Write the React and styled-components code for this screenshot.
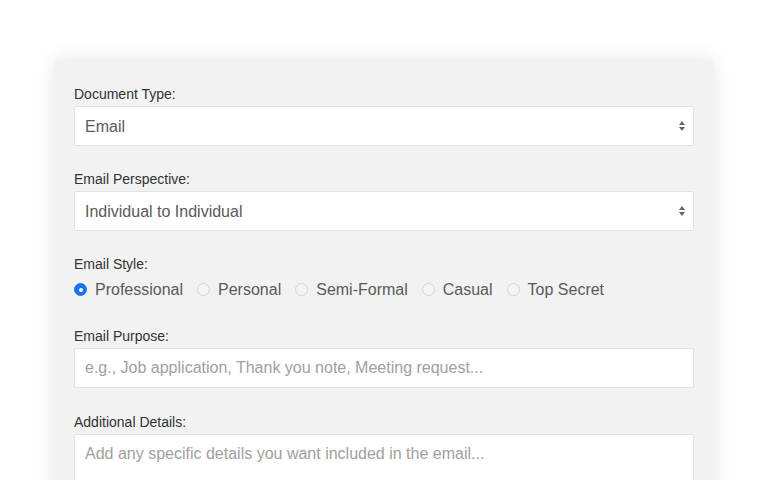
import React, { useState } from "react";
import styled, { createGlobalStyle } from "styled-components";

const GlobalStyle = createGlobalStyle`
  body {
    margin: 0;
    background: #ffffff;
    font-family: "Liberation Sans", Arial, sans-serif;
  }
`;

const styles = ["Professional", "Personal", "Semi-Formal", "Casual", "Top Secret"];

const App = () => {
  const [style, setStyle] = useState("Professional");

  return (
    <>
      <GlobalStyle />
      <Card>
        <Group>
          <Label>Document Type:</Label>
          <SelectWrap>
            <Select defaultValue="Email">
              <option>Email</option>
              <option>Letter</option>
            </Select>
          </SelectWrap>
        </Group>

        <Group>
          <Label>Email Perspective:</Label>
          <SelectWrap>
            <Select defaultValue="Individual to Individual">
              <option>Individual to Individual</option>
              <option>Business to Individual</option>
            </Select>
          </SelectWrap>
        </Group>

        <Group>
          <Label>Email Style:</Label>
          <RadioRow>
            {styles.map((s) => (
              <RadioOption key={s} onClick={() => setStyle(s)}>
                <RadioDot $checked={style === s} />
                {s}
              </RadioOption>
            ))}
          </RadioRow>
        </Group>

        <Group $space={26}>
          <Label>Email Purpose:</Label>
          <Input placeholder="e.g., Job application, Thank you note, Meeting request..." />
        </Group>

        <Group>
          <Label>Additional Details:</Label>
          <TextArea placeholder="Add any specific details you want included in the email..." />
        </Group>
      </Card>
    </>
  );
};

export default App;

const Card = styled.div`
  width: 660px;
  box-sizing: border-box;
  margin: 60px auto;
  padding: 26px 20px 25px;
  background: #f2f2f2;
  box-shadow: 0 0 18px rgba(0, 0, 0, 0.1);
`;

const Group = styled.div`
  display: flex;
  flex-direction: column;
  margin-bottom: ${(p) => p.$space || 25}px;
`;

const Label = styled.label`
  font-size: 14px;
  line-height: 16px;
  color: #333;
  margin-bottom: 4px;
`;

const fieldBase = `
  box-sizing: border-box;
  width: 100%;
  border: 1px solid #e2e2e2;
  border-radius: 2px;
  background: #fff;
  font-family: "Liberation Sans", Arial, sans-serif;
  font-size: 16px;
  color: #5a5a5a;
  padding: 0 10px;
  outline: none;

  &::placeholder {
    color: #a0a0a0;
  }
`;

const SelectWrap = styled.div`
  position: relative;

  &::before,
  &::after {
    content: "";
    position: absolute;
    right: 9px;
    border-left: 3.5px solid transparent;
    border-right: 3.5px solid transparent;
    pointer-events: none;
  }

  &::before {
    top: 15px;
    border-bottom: 4px solid #666;
  }

  &::after {
    top: 21px;
    border-top: 4px solid #666;
  }
`;

const Select = styled.select`
  ${fieldBase}
  height: 40px;
  appearance: none;
  -webkit-appearance: none;
`;

const Input = styled.input`
  ${fieldBase}
  height: 40px;
`;

const TextArea = styled.textarea`
  ${fieldBase}
  height: 110px;
  padding: 9px 10px;
  resize: vertical;
  line-height: 20px;
`;

const RadioRow = styled.div`
  display: flex;
  align-items: center;
  height: 27px;
  gap: 14px;
`;

const RadioOption = styled.span`
  display: inline-flex;
  align-items: center;
  gap: 8px;
  font-size: 16px;
  color: #5a5a5a;
  cursor: pointer;
`;

const RadioDot = styled.span`
  box-sizing: border-box;
  width: 13px;
  height: 13px;
  border-radius: 50%;
  flex-shrink: 0;
  border: 1px solid ${(p) => (p.$checked ? "#1a73e8" : "#d4d4d4")};
  background: ${(p) => (p.$checked ? "#1a73e8" : "#f4f4f4")};
  position: relative;

  &::after {
    content: "";
    display: ${(p) => (p.$checked ? "block" : "none")};
    position: absolute;
    left: 50%;
    top: 50%;
    width: 4px;
    height: 4px;
    margin: -2px 0 0 -2px;
    border-radius: 50%;
    background: #fff;
  }
`;
